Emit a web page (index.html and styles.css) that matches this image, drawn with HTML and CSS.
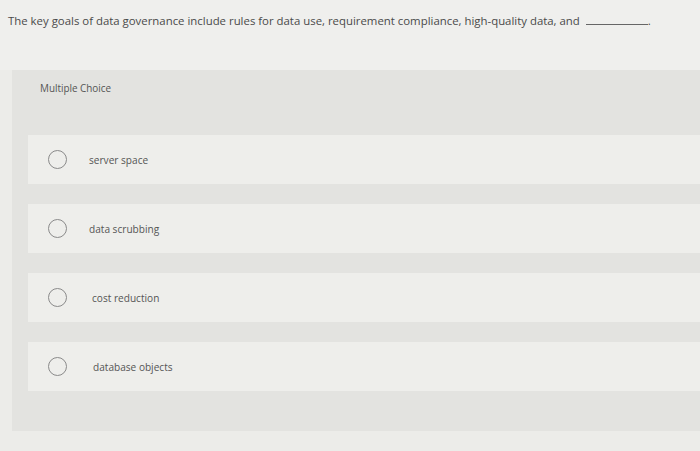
FILE: index.html
```html
<!DOCTYPE html>
<html>
<head>
<meta charset="utf-8">
<link rel="stylesheet" href="styles.css">
</head>
<body>
<div class="page">
  <div class="question">The key goals of data governance include rules for data use, requirement compliance, high-quality data, and <span class="blank"></span>.</div>
  <div class="panel">
    <div class="label">Multiple Choice</div>
    <div class="options">
      <div class="option"><span class="radio"></span><span class="text">server space</span></div>
      <div class="option"><span class="radio"></span><span class="text">data scrubbing</span></div>
      <div class="option"><span class="radio"></span><span class="text t3">cost reduction</span></div>
      <div class="option"><span class="radio"></span><span class="text t4">database objects</span></div>
    </div>
  </div>
</div>
</body>
</html>
```
FILE: styles.css
```css
html, body {
  margin: 0;
  padding: 0;
}
body {
  background: #ecece9;
  font-family: "Open Sans", "Liberation Sans", sans-serif;
  color: #4a4a4a;
  width: 700px;
  height: 451px;
  overflow: hidden;
}
.page {
  display: flex;
  flex-direction: column;
}
.question {
  height: 70px;
  box-sizing: border-box;
  padding: 13px 0 0 8px;
  font-size: 11.4px;
  line-height: 16px;
  letter-spacing: 0;
  background: #efefed;
  white-space: nowrap;
}
.blank {
  display: inline-block;
  width: 62px;
  border-bottom: 1px solid #666;
  margin-left: 3px;
  vertical-align: baseline;
}
.panel {
  margin-left: 12px;
  background: #e3e3e0;
  padding: 12px 0 40px 0;
}
.label {
  padding-left: 28px;
  font-size: 9.9px;
  line-height: 13px;
  color: #555;
}
.options {
  margin-top: 40px;
  margin-left: 16px;
  display: flex;
  flex-direction: column;
  gap: 20px;
}
.option {
  height: 49px;
  background: #eeeeeb;
  display: flex;
  align-items: center;
  padding-left: 20px;
}
.radio {
  width: 17px;
  height: 17px;
  border: 1.5px solid #8a8a8a;
  border-radius: 50%;
  flex: none;
}
.text {
  margin-left: 22px;
  font-size: 10.1px;
  color: #555;
}
.t3 { margin-left: 25px; }
.t4 { margin-left: 26px; }
```
